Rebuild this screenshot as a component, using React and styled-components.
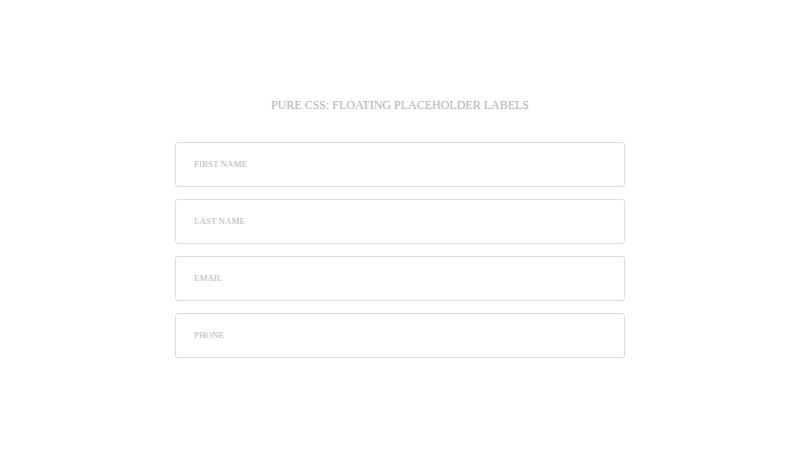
import React from "react";
import styled, { createGlobalStyle } from "styled-components";

const GlobalStyle = createGlobalStyle`
  html, body {
    margin: 0;
    padding: 0;
    background: #fff;
    font-family: "Liberation Serif", "Times New Roman", serif;
  }
`;

const Page = styled.div`
  display: flex;
  flex-direction: column;
  align-items: center;
  padding-top: 97px;
`;

const Title = styled.h1`
  margin: 0 0 29px;
  font-size: 12px;
  font-weight: normal;
  line-height: 16px;
  color: #b0b0b0;
  text-transform: uppercase;
`;

const Form = styled.form`
  display: flex;
  flex-direction: column;
  gap: 12px;
  width: 450px;
`;

const Field = styled.label`
  position: relative;
  display: block;
  height: 45px;
  box-sizing: border-box;
  border: 1px solid #dcdcdc;
  border-radius: 3px;
  background: #fff;
`;

const Input = styled.input`
  width: 100%;
  height: 100%;
  box-sizing: border-box;
  border: 0;
  outline: none;
  background: transparent;
  padding: 12px 19px 0;
  font-family: inherit;
  font-size: 13px;
  color: #555;

  &:focus + span,
  &:not(:placeholder-shown) + span {
    top: 6px;
    font-size: 8px;
  }
`;

const Label = styled.span`
  position: absolute;
  left: 18px;
  top: 15px;
  font-size: 9px;
  line-height: 12px;
  color: #b5b5b5;
  text-transform: uppercase;
  pointer-events: none;
  transition: top 0.2s, font-size 0.2s;
`;

const fields = [
  { name: "firstName", label: "First Name", type: "text" },
  { name: "lastName", label: "Last Name", type: "text" },
  { name: "email", label: "Email", type: "email" },
  { name: "phone", label: "Phone", type: "tel" },
];

function App() {
  return (
    <Page>
      <GlobalStyle />
      <Title>Pure CSS: Floating Placeholder Labels</Title>
      <Form onSubmit={e => e.preventDefault()}>
        {fields.map(f => (
          <Field key={f.name}>
            <Input name={f.name} type={f.type} placeholder=" " />
            <Label>{f.label}</Label>
          </Field>
        ))}
      </Form>
    </Page>
  );
}

export default App;
